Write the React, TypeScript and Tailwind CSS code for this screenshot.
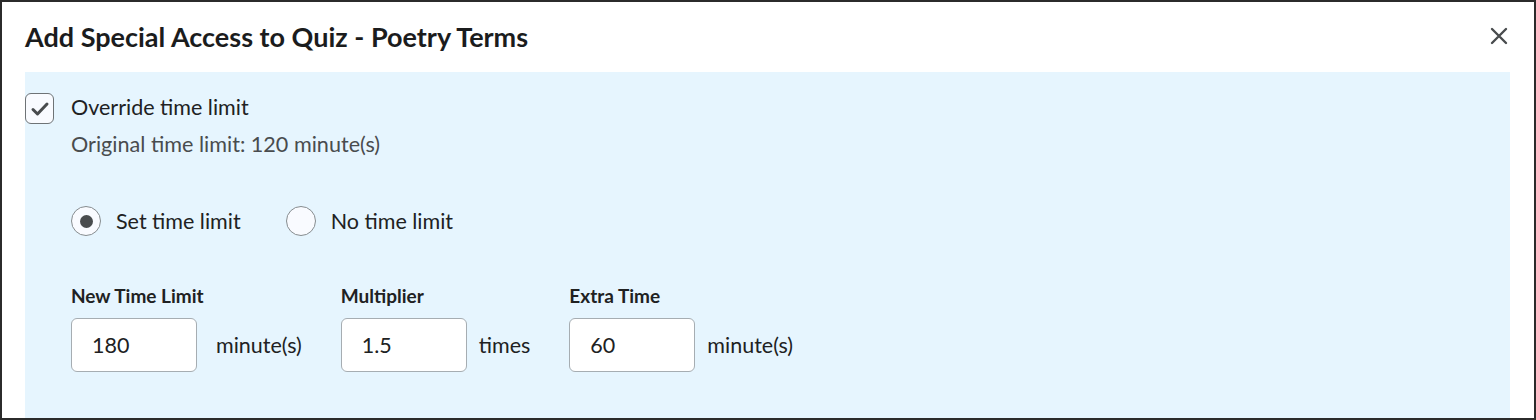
import React from "react";

function CheckIcon() {
  return (
    <svg width="20" height="18" viewBox="0 0 20 18" fill="none">
      <path d="M3 9.5l4.5 4.5L17 4" stroke="#494c4e" strokeWidth="3" strokeLinecap="round" strokeLinejoin="round" />
    </svg>
  );
}

function Radio({ checked, label }: { checked?: boolean; label: string }) {
  return (
    <div className="flex items-center">
      <div className="w-[30px] h-[30px] rounded-full border border-[#868c8f] bg-[#f9fbff] flex items-center justify-center">
        {checked && <div className="w-[13px] h-[13px] rounded-full bg-[#494c4e]" />}
      </div>
      <span className="ml-[15px] text-[21.5px] leading-[26px] text-[#202122]">{label}</span>
    </div>
  );
}

function Field({ label, value, unit, wide }: { label: string; value: string; unit: string; wide?: boolean }) {
  return (
    <div className="flex flex-col">
      <div className="text-[19px] font-bold text-[#202122] leading-[20px] h-[20px]">{label}</div>
      <div className="flex items-center mt-[12px]">
        <div className="w-[126px] h-[54px] rounded-[6px] border border-[#a6adb2] bg-white flex items-center pl-[20px] text-[21.5px] text-[#202122]">
          {value}
        </div>
        <span className={`${wide ? "ml-[19px]" : "ml-[12px]"} text-[21.5px] text-[#202122]`}>{unit}</span>
      </div>
    </div>
  );
}

export default function App() {
  return (
    <div
      className="w-[1536px] h-[420px] border-2 border-[#2b2b2b] bg-white flex flex-col"
      style={{ fontFamily: "Lato, 'Noto Sans', sans-serif" }}
    >
      <div className="h-[70px] flex items-center justify-between pl-[23px] pr-[26px] shrink-0">
        <h1 className="text-[27px] leading-[32px] font-bold text-[#1b1c1d]">Add Special Access to Quiz - Poetry Terms</h1>
        <svg width="18" height="18" viewBox="0 0 18 18" className="-mt-[2px]">
          <path d="M2 2L16 16M16 2L2 16" stroke="#494c4e" strokeWidth="2.4" strokeLinecap="round" />
        </svg>
      </div>
      <div className="ml-[23px] mr-[24px] flex-1 bg-[#e6f5fe] flex flex-col pt-[21px]">
        <div className="flex items-center h-[31px]">
          <div className="w-[29px] h-[31px] rounded-[6px] border border-[#6e7376] bg-[#f9fbff] flex items-center justify-center">
            <CheckIcon />
          </div>
          <span className="ml-[17px] text-[21.5px] leading-[26px] text-[#202122] -mt-[4px]">Override time limit</span>
        </div>
        <div className="ml-[46px] mt-[7px] text-[21.6px] leading-[26px] text-[#494c4e]">Original time limit: 120 minute(s)</div>
        <div className="ml-[46px] mt-[49px] flex items-center gap-[45px]">
          <Radio checked label="Set time limit" />
          <Radio label="No time limit" />
        </div>
        <div className="ml-[46px] mt-[50px] flex gap-[39px]">
          <Field label="New Time Limit" value="180" unit="minute(s)" wide />
          <Field label="Multiplier" value="1.5" unit="times" />
          <Field label="Extra Time" value="60" unit="minute(s)" />
        </div>
      </div>
    </div>
  );
}
